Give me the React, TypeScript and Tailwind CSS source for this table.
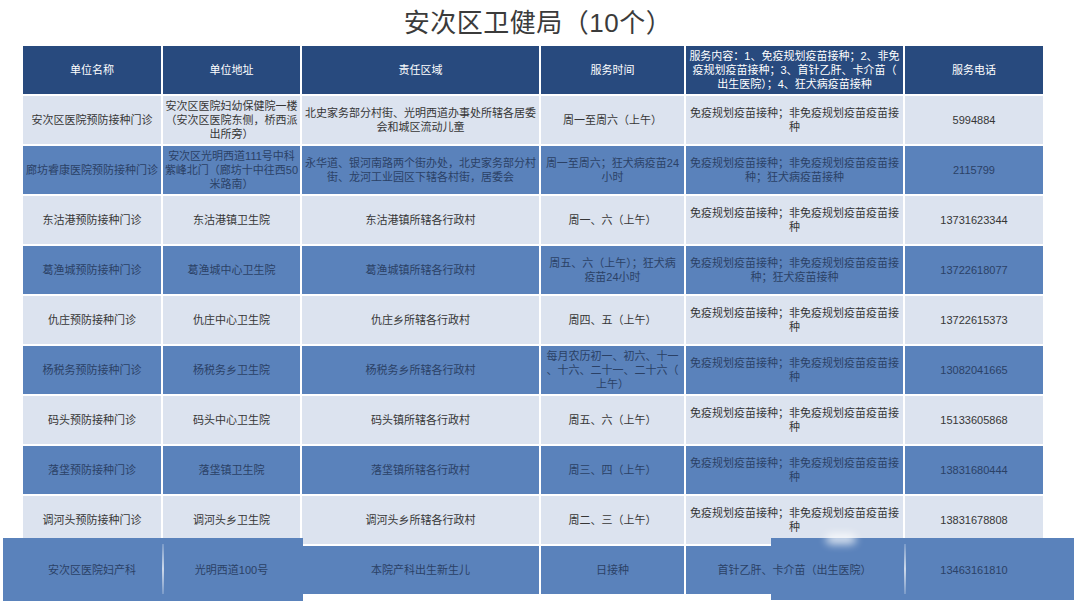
import React from "react";

type Row = { blue: boolean; cells: string[][] };

const rows: Row[] = [
  {
    blue: false,
    cells: [
      ["安次区医院预防接种门诊"],
      ["安次区医院妇幼保健院一楼", "（安次区医院东侧，桥西派", "出所旁）"],
      ["北史家务部分村街、光明西道办事处所辖各居委", "会和城区流动儿童"],
      ["周一至周六（上午）"],
      ["免疫规划疫苗接种；非免疫规划疫苗疫苗接", "种"],
      ["5994884"],
    ],
  },
  {
    blue: true,
    cells: [
      ["廊坊睿康医院预防接种门诊"],
      ["安次区光明西道111号中科", "紫峰北门（廊坊十中往西50", "米路南）"],
      ["永华道、银河南路两个街办处，北史家务部分村", "街、龙河工业园区下辖各村街，居委会"],
      ["周一至周六；狂犬病疫苗24", "小时"],
      ["免疫规划疫苗接种；非免疫规划疫苗疫苗接", "种；狂犬病疫苗接种"],
      ["2115799"],
    ],
  },
  {
    blue: false,
    cells: [
      ["东沽港预防接种门诊"],
      ["东沽港镇卫生院"],
      ["东沽港镇所辖各行政村"],
      ["周一、六（上午）"],
      ["免疫规划疫苗接种；非免疫规划疫苗疫苗接", "种"],
      ["13731623344"],
    ],
  },
  {
    blue: true,
    cells: [
      ["葛渔城预防接种门诊"],
      ["葛渔城中心卫生院"],
      ["葛渔城镇所辖各行政村"],
      ["周五、六（上午）；狂犬病", "疫苗24小时"],
      ["免疫规划疫苗接种；非免疫规划疫苗疫苗接", "种；狂犬疫苗接种"],
      ["13722618077"],
    ],
  },
  {
    blue: false,
    cells: [
      ["仇庄预防接种门诊"],
      ["仇庄中心卫生院"],
      ["仇庄乡所辖各行政村"],
      ["周四、五（上午）"],
      ["免疫规划疫苗接种；非免疫规划疫苗疫苗接", "种"],
      ["13722615373"],
    ],
  },
  {
    blue: true,
    cells: [
      ["杨税务预防接种门诊"],
      ["杨税务乡卫生院"],
      ["杨税务乡所辖各行政村"],
      ["每月农历初一、初六、十一", "、十六、二十一、二十六（", "上午）"],
      ["免疫规划疫苗接种；非免疫规划疫苗疫苗接", "种"],
      ["13082041665"],
    ],
  },
  {
    blue: false,
    cells: [
      ["码头预防接种门诊"],
      ["码头中心卫生院"],
      ["码头镇所辖各行政村"],
      ["周五、六（上午）"],
      ["免疫规划疫苗接种；非免疫规划疫苗疫苗接", "种"],
      ["15133605868"],
    ],
  },
  {
    blue: true,
    cells: [
      ["落垡预防接种门诊"],
      ["落垡镇卫生院"],
      ["落垡镇所辖各行政村"],
      ["周三、四（上午）"],
      ["免疫规划疫苗接种；非免疫规划疫苗疫苗接", "种"],
      ["13831680444"],
    ],
  },
  {
    blue: false,
    cells: [
      ["调河头预防接种门诊"],
      ["调河头乡卫生院"],
      ["调河头乡所辖各行政村"],
      ["周二、三（上午）"],
      ["免疫规划疫苗接种；非免疫规划疫苗疫苗接", "种"],
      ["13831678808"],
    ],
  },
  {
    blue: true,
    cells: [
      ["安次区医院妇产科"],
      ["光明西道100号"],
      ["本院产科出生新生儿"],
      ["日接种"],
      ["首针乙肝、卡介苗（出生医院）"],
      ["13463161810"],
    ],
  },
];

const header: string[][] = [
  ["单位名称"],
  ["单位地址"],
  ["责任区域"],
  ["服务时间"],
  ["服务内容：1、免疫规划疫苗接种；2、非免", "疫规划疫苗接种；3、首针乙肝、卡介苗（", "出生医院）；4、狂犬病疫苗接种"],
  ["服务电话"],
];

function Lines({ lines }: { lines: string[] }) {
  return (
    <span className="relative z-10 flex flex-col items-center">
      {lines.map((l, i) => (
        <span key={i} className="whitespace-nowrap">
          {l}
        </span>
      ))}
    </span>
  );
}

export default function App() {
  return (
    <div
      className="relative w-[1074px] h-[601px] overflow-hidden bg-white"
      style={{ fontFamily: '"Liberation Sans", "Noto Sans CJK SC", sans-serif' }}
    >
      <div className="h-[46px] flex items-center justify-center pl-[2px]">
        <h1 className="text-[26px] leading-none text-[#3b3b3b] font-normal tracking-[0.5px]">
          安次区卫健局（10个）
        </h1>
      </div>
      <div className="ml-[23px] w-[1020px] grid grid-cols-[138px_137px_237px_143px_217px_138px] auto-rows-[48px] gap-[2px] bg-white text-[11px] leading-[14px]">
        {header.map((h, i) => (
          <div key={"h" + i} className="bg-[#284a7e] text-white flex items-center justify-center text-center">
            <Lines lines={h} />
          </div>
        ))}
        {rows.map((r, ri) =>
          r.cells.map((c, ci) => (
            <div
              key={ri + "-" + ci}
              className={
                r.blue
                  ? "bg-[#5a82bb] text-[#2b4166] flex items-center justify-center text-center"
                  : "bg-[#dce3ef] text-[#363636] flex items-center justify-center text-center"
              }
            >
              <Lines lines={c} />
            </div>
          ))
        )}
      </div>
      {/* pasted patches over the last row */}
      <div className="absolute left-[3px] top-[538px] w-[300px] h-[63px] bg-[#5a82bb] z-[5]">
        <div className="absolute left-[159px] top-[6px] w-[2px] h-[50px] bg-gradient-to-b from-white/20 via-white/70 to-white/20" />
      </div>
      <div className="absolute left-[771px] top-[538px] w-[303px] h-[62px] bg-[#5a82bb] z-[5]">
        <div className="absolute left-[133px] top-[6px] w-[2px] h-[50px] bg-gradient-to-b from-white/20 via-white/70 to-white/20" />
      </div>
      <div className="absolute left-[826px] top-[534px] w-[30px] h-[10px] rounded-full bg-white/80 blur-[4px] z-[6]" />
    </div>
  );
}
